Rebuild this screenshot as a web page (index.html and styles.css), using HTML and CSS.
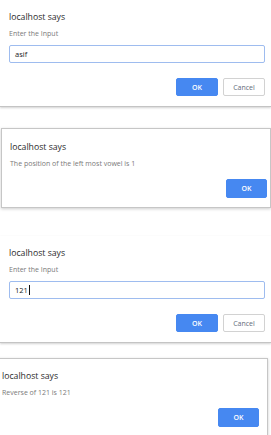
FILE: index.html
```html
<!DOCTYPE html>
<html lang="en">
<head>
  <meta charset="UTF-8">
  <meta name="viewport" content="width=device-width, initial-scale=1.0">
  <title>Dialogs</title>
  <link rel="stylesheet" href="styles.css">
</head>
<body>
  <div class="dialog prompt">
    <div class="title">localhost says</div>
    <div class="message">Enter the Input</div>
    <div class="field">asif</div>
    <div class="buttons">
      <button class="ok">OK</button>
      <button class="cancel">Cancel</button>
    </div>
  </div>

  <div class="dialog alert">
    <div class="title">localhost says</div>
    <div class="message">The position of the left most vowel is 1</div>
    <div class="buttons">
      <button class="ok">OK</button>
    </div>
  </div>

  <div class="dialog prompt prompt-second">
    <div class="title">localhost says</div>
    <div class="message">Enter the Input</div>
    <div class="field">121<span class="caret"></span></div>
    <div class="buttons">
      <button class="ok">OK</button>
      <button class="cancel">Cancel</button>
    </div>
  </div>

  <div class="dialog alert alert-shifted">
    <div class="title">localhost says</div>
    <div class="message">Reverse of 121 is 121</div>
    <div class="buttons">
      <button class="ok">OK</button>
    </div>
  </div>
</body>
</html>
```

FILE: styles.css
```css
body {
  margin: 0;
  background: #ffffff;
  font-family: "Open Sans", "Noto Sans", sans-serif;
  overflow: hidden;
}

.dialog {
  box-sizing: border-box;
  background: #ffffff;
}

.title {
  font-size: 8.7px;
  line-height: 14px;
  color: #2b2b2b;
}

.message {
  margin-top: 4px;
  font-size: 7px;
  line-height: 12px;
  color: #7a7a7a;
}

.buttons {
  display: flex;
  justify-content: flex-end;
  gap: 5px;
}

button {
  box-sizing: border-box;
  width: 42px;
  height: 18px;
  padding: 0;
  border-radius: 2px;
  font-family: inherit;
  font-size: 7px;
  cursor: pointer;
}

.ok {
  background: #4688f1;
  border: 1px solid #4688f1;
  color: #ffffff;
  font-weight: 600;
}

.cancel {
  background: #ffffff;
  border: 1px solid #d2d2d2;
  color: #5f6b7a;
}

/* prompt dialogs */
.prompt {
  height: 107px;
  padding: 10px 6px 0 9px;
  border-bottom: 1px solid #c4c4c4;
  box-shadow: 0 1px 2px rgba(0, 0, 0, 0.18);
}

.prompt-second {
  margin-top: 28px;
}

.prompt .field {
  box-sizing: border-box;
  height: 18px;
  margin-top: 5px;
  padding: 0 5px;
  border: 1px solid #9ebcef;
  border-radius: 2px;
  font-size: 7.5px;
  line-height: 16px;
  color: #222222;
}

.caret {
  display: inline-block;
  width: 1px;
  height: 10px;
  margin-left: 1px;
  background: #111111;
  vertical-align: -2px;
}

.prompt .buttons {
  margin-top: 15px;
}

/* alert dialogs */
.alert {
  width: 270px;
  height: 80px;
  margin: 21px 0 0 1px;
  padding: 11px 3px 0 8px;
  border: 1px solid #c6c6c6;
  box-shadow: 0 1px 3px rgba(0, 0, 0, 0.2);
}

.alert .buttons {
  margin-top: 9px;
}

.alert .ok {
  width: 41px;
  height: 19px;
}

.alert-shifted {
  width: 275px;
  height: 78px;
  margin: 15px 0 0 -7px;
  padding: 10px 8px 0 8px;
  border-bottom: none;
}
```
